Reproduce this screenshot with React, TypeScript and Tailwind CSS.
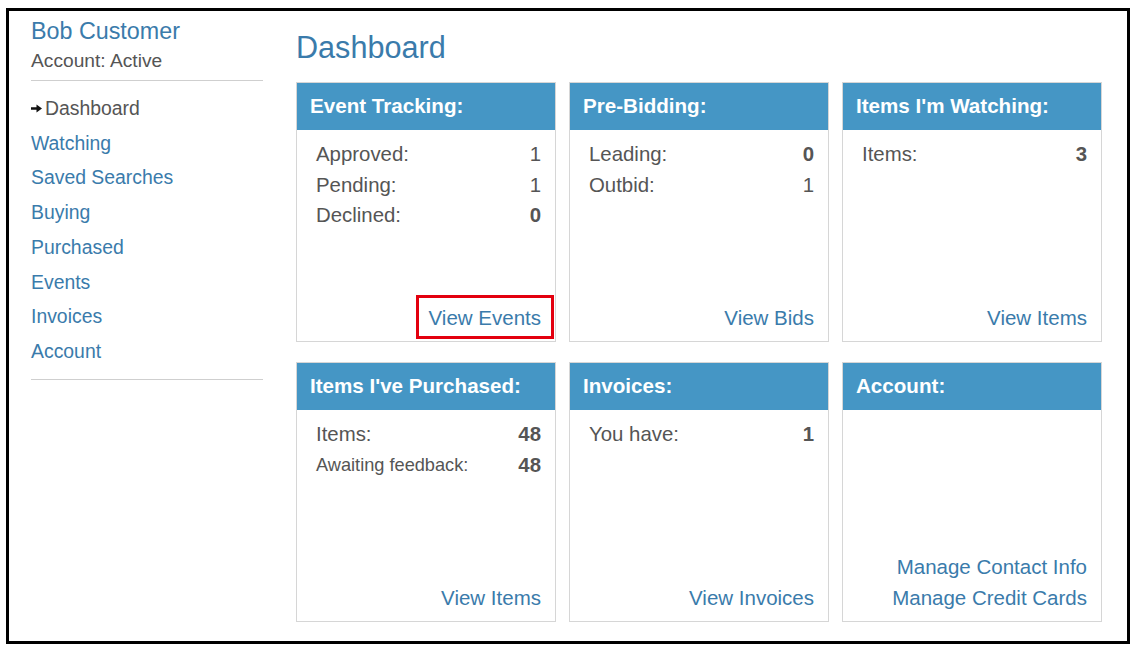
import React from 'react';

type Row = { label: string; value: string; bold?: boolean; small?: boolean };

type CardProps = {
  title: string;
  rows: Row[];
  links: string[];
  highlight?: boolean;
};

const navItems = ['Watching', 'Saved Searches', 'Buying', 'Purchased', 'Events', 'Invoices', 'Account'];

const ArrowIcon = () => (
  <svg width="11" height="11" viewBox="0 0 11 11" className="mr-[3px]">
    <path d="M0 4.2h5.5V1.5L11 5.5 5.5 9.5V6.8H0z" fill="#111" />
  </svg>
);

const Card = ({ title, rows, links, highlight }: CardProps) => {
  return (
    <div className="flex h-[260px] flex-col border border-[#d6d6d6] bg-white">
      {/* header */}
      <div className="flex h-[47px] items-center bg-[#4596c5] pl-[13px] text-[20.6px] font-bold text-white">
        {title}
      </div>

      {/* rows */}
      <div className="flex-1 pt-[9px] pl-[19px] pr-[14px]">
        {rows.map((row) => (
          <div key={row.label} className="flex justify-between leading-[30.5px] text-[#555]">
            <span className={row.small ? 'text-[18.2px]' : 'text-[20.4px]'}>{row.label}</span>
            <span className={row.bold ? 'text-[20.4px] font-bold' : 'text-[20.4px]'}>{row.value}</span>
          </div>
        ))}
      </div>

      {/* links */}
      <div className="flex flex-col items-end pr-[14px] pb-[8px]">
        {links.map((link) => (
          <a key={link} href="#" className="relative text-[20.5px] leading-[31px] text-[#3a7bab]">
            {link}
            {highlight && (
              <span className="absolute -top-[7px] -bottom-[6px] -left-[13px] -right-[13px] border-[3px] border-[#e3000f]" />
            )}
          </a>
        ))}
      </div>
    </div>
  );
};

export default function App() {
  return (
    <div className="h-[648px] w-[1139px] bg-white pt-[8px] pl-[6px]" style={{ fontFamily: '"Liberation Sans", Arial, sans-serif' }}>
      <div className="flex h-[636px] w-[1124px] border-[3px] border-black bg-white">
        {/* Sidebar */}
        <div className="ml-[22px] w-[232px] pt-[5px]">
          <div className="text-[23.3px] leading-[30px] text-[#3a7bab]">Bob Customer</div>
          <div className="text-[19.2px] leading-[30px] text-[#555]">Account: Active</div>
          <div className="mt-[4px] border-t border-[#cfcfcf]" />
          <ul className="py-[10px]">
            <li className="flex items-center text-[19.4px] leading-[34.7px] text-[#555]">
              <ArrowIcon />
              Dashboard
            </li>
            {navItems.map((item) => (
              <li key={item} className="text-[19.4px] leading-[34.7px] text-[#3a7bab]">
                <a href="#">{item}</a>
              </li>
            ))}
          </ul>
          <div className="border-t border-[#cfcfcf]" />
        </div>

        {/* Main */}
        <div className="ml-[33px] w-[806px] pt-[18px]">
          <h1 className="mb-[17px] text-[30.6px] leading-[36px] text-[#3a7bab]">Dashboard</h1>
          <div className="grid grid-cols-3 gap-x-[13px] gap-y-[20px]">
            <Card
              title="Event Tracking:"
              rows={[
                { label: 'Approved:', value: '1' },
                { label: 'Pending:', value: '1' },
                { label: 'Declined:', value: '0', bold: true },
              ]}
              links={['View Events']}
              highlight
            />
            <Card
              title="Pre-Bidding:"
              rows={[
                { label: 'Leading:', value: '0', bold: true },
                { label: 'Outbid:', value: '1' },
              ]}
              links={['View Bids']}
            />
            <Card
              title="Items I'm Watching:"
              rows={[{ label: 'Items:', value: '3', bold: true }]}
              links={['View Items']}
            />
            <Card
              title="Items I've Purchased:"
              rows={[
                { label: 'Items:', value: '48', bold: true },
                { label: 'Awaiting feedback:', value: '48', bold: true, small: true },
              ]}
              links={['View Items']}
            />
            <Card
              title="Invoices:"
              rows={[{ label: 'You have:', value: '1', bold: true }]}
              links={['View Invoices']}
            />
            <Card title="Account:" rows={[]} links={['Manage Contact Info', 'Manage Credit Cards']} />
          </div>
        </div>
      </div>
    </div>
  );
}
